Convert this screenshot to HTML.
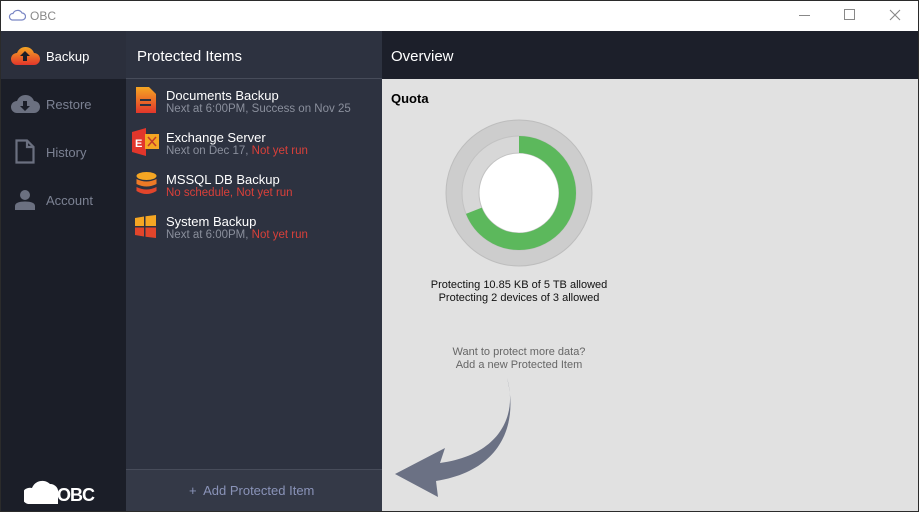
<!DOCTYPE html>
<html><head><meta charset="utf-8"><style>
*{margin:0;padding:0;box-sizing:border-box}
body{width:919px;height:512px;overflow:hidden;background:#2b2b2b;font-family:"Liberation Sans",sans-serif;position:relative}
.abs{position:absolute}
.title{left:1px;top:1px;width:917px;height:30px;background:#fff}
.nav{left:1px;top:31px;width:125px;height:480px;background:#1b1e28}
.navsel{left:1px;top:31px;width:125px;height:48px;background:#2b2f3c}
.mid{left:126px;top:31px;width:256px;height:480px;background:#2d3240}
.ovh{left:382px;top:31px;width:536px;height:48px;background:#1c1f2a}
.ov{left:382px;top:79px;width:536px;height:432px;background:#e1e1e1}
.nt{font-size:13px;color:#7c8293}
.it1{font-size:13px;color:#fff}
.it2{font-size:11.5px;color:#8a8f9c}
.r{color:#d9403a}
</style></head><body>
<div class="abs title"></div>
<svg class="abs" style="left:8px;top:8px" width="18" height="14" viewBox="0 0 18 14"><path d="M4 12 H14 A3.5 3.5 0 0 0 14 5 A5 5 0 0 0 5 5.5 A3.3 3.3 0 0 0 4 12Z" fill="none" stroke="#7a86c4" stroke-width="1.2"/></svg>
<div class="abs" style="left:30px;top:9px;font-size:12px;color:#888">OBC</div>
<div class="abs" style="left:799px;top:15px;width:11px;height:1px;background:#888"></div>
<div class="abs" style="left:844px;top:9px;width:11px;height:11px;border:1px solid #888"></div>
<svg class="abs" style="left:889px;top:9px" width="12" height="12"><path d="M1 1L11 11M11 1L1 11" stroke="#888" stroke-width="1.1"/></svg>

<div class="abs nav"></div><div class="abs navsel"></div>
<svg class="abs" style="left:10px;top:44px" width="30" height="22" viewBox="0 0 30 22"><defs><linearGradient id="g" x1="0" y1="0" x2="0" y2="1"><stop offset="0" stop-color="#f5a623"/><stop offset="1" stop-color="#e2362b"/></linearGradient></defs><path d="M7 21H24A6 6 0 0 0 24 9A9 9 0 0 0 7 9A6 6 0 0 0 7 21Z" fill="url(#g)"/><path d="M15 7L10 12H13V17H17V12H20Z" fill="#1b1e28"/></svg>
<div class="abs" style="left:46px;top:49px;font-size:13px;color:#fff">Backup</div>
<svg class="abs" style="left:10px;top:92px" width="30" height="22" viewBox="0 0 30 22"><path d="M7 21H24A6 6 0 0 0 24 9A9 9 0 0 0 7 9A6 6 0 0 0 7 21Z" fill="#6b7080"/><path d="M15 19L10 14H13V9H17V14H20Z" fill="#1b1e28"/></svg>
<div class="abs nt" style="left:46px;top:97px">Restore</div>
<svg class="abs" style="left:15px;top:139px" width="20" height="25" viewBox="0 0 20 25"><path d="M1.5 1.5H12L18.5 8V23.5H1.5Z M12 1.5V8H18.5" fill="none" stroke="#6b7080" stroke-width="2.2"/></svg>
<div class="abs nt" style="left:46px;top:145px">History</div>
<svg class="abs" style="left:15px;top:189px" width="20" height="22" viewBox="0 0 20 22"><circle cx="10" cy="6" r="5" fill="#6b7080"/><path d="M0 21V17C0 14 4 12.5 10 12.5S20 14 20 17V21Z" fill="#6b7080"/></svg>
<div class="abs nt" style="left:46px;top:193px">Account</div>
<svg class="abs" style="left:24px;top:472px" width="80" height="34" viewBox="0 0 80 34"><path d="M4 32H34V22A8 8 0 0 0 26 12A11 11 0 0 0 8 16A8 8 0 0 0 4 32Z" fill="#fff"/></svg>
<div class="abs" style="left:57px;top:485px;font-size:18px;font-weight:bold;color:#fff;letter-spacing:-1px">OBC</div>

<div class="abs mid"></div>
<div class="abs" style="left:137px;top:48px;font-size:15px;color:#fff">Protected Items</div>
<div class="abs" style="left:126px;top:78px;width:256px;height:1px;background:#474c5a"></div>
<svg class="abs" style="left:136px;top:87px" width="20" height="26"><path d="M0 0H13L20 7V26H0Z" fill="url(#g)"/><rect x="4" y="12" width="11" height="2" fill="#2d3240"/><rect x="4" y="17" width="11" height="2" fill="#2d3240"/></svg>
<div class="abs it1" style="left:166px;top:88px">Documents Backup</div>
<div class="abs it2" style="left:166px;top:103px">Next at 6:00PM, Success on Nov 25</div>
<svg class="abs" style="left:132px;top:128px" width="30" height="28"><path d="M0 4L14 0V28L0 24Z" fill="#e2362b"/><rect x="13" y="6" width="14" height="15" fill="#f5a623"/><text x="3" y="19" font-size="11" font-weight="bold" fill="#fff" font-family="Liberation Sans">E</text><path d="M16 9L24 18M24 9L16 18" stroke="#c0392b" stroke-width="1.5"/></svg>
<div class="abs it1" style="left:166px;top:130px">Exchange Server</div>
<div class="abs it2" style="left:166px;top:145px">Next on Dec 17, <span class="r">Not yet run</span></div>
<svg class="abs" style="left:136px;top:172px" width="21" height="24"><ellipse cx="10.5" cy="4" rx="10" ry="4" fill="#f5a623"/><path d="M0.5 7Q10.5 12 20.5 7V12Q10.5 17 0.5 12Z" fill="#ee7a26"/><path d="M0.5 15Q10.5 20 20.5 15V19Q10.5 25 0.5 19Z" fill="#e2452b"/></svg>
<div class="abs it1" style="left:166px;top:172px">MSSQL DB Backup</div>
<div class="abs it2 r" style="left:166px;top:187px">No schedule, Not yet run</div>
<svg class="abs" style="left:135px;top:215px" width="22" height="23"><path d="M0 3L9 1.5V11H0Z M10.5 1.3L21 0V11H10.5Z" fill="#f5a623"/><path d="M0 12.5H9V21.5L0 20Z M10.5 12.5H21V23L10.5 21.7Z" fill="#e2452b"/></svg>
<div class="abs it1" style="left:166px;top:214px">System Backup</div>
<div class="abs it2" style="left:166px;top:229px">Next at 6:00PM, <span class="r">Not yet run</span></div>
<div class="abs" style="left:126px;top:469px;width:256px;height:42px;background:#343947;border-top:1px solid #474c5a"></div>
<div class="abs" style="left:189px;top:483px;font-size:13px;color:#8a93b8">+&nbsp; Add Protected Item</div>

<div class="abs ovh"></div>
<div class="abs" style="left:391px;top:48px;font-size:15px;color:#fff">Overview</div>
<div class="abs ov"></div>
<div class="abs" style="left:391px;top:91px;font-size:13px;font-weight:bold;color:#000">Quota</div>
<svg class="abs" style="left:444px;top:118px" width="150" height="150" viewBox="0 0 150 150"><circle cx="75" cy="75" r="73" fill="#cdcdcd" stroke="#bdbdbd"/><circle cx="75" cy="75" r="57" fill="#d7d7d7" stroke="#c2c2c2"/><circle cx="75" cy="75" r="40" fill="#fff" stroke="#c2c2c2"/><circle cx="75" cy="75" r="48.5" fill="none" stroke="#5cb85c" stroke-width="17" stroke-dasharray="210 400" transform="rotate(-90 75 75)"/></svg>
<div class="abs" style="left:382px;top:279px;width:274px;text-align:center;font-size:11px;line-height:13px;color:#111">Protecting 10.85 KB of 5 TB allowed<br>Protecting 2 devices of 3 allowed</div>
<div class="abs" style="left:382px;top:346px;width:274px;text-align:center;font-size:11px;line-height:13px;color:#666">Want to protect more data?<br>Add a new Protected Item</div>
<svg class="abs" style="left:390px;top:375px" width="130" height="130" viewBox="0 0 130 130"><path d="M117 3C128 40 110 80 50 88L55 73L5 99L48 122L46 106C115 95 128 45 117 3Z" fill="#6b7184"/></svg>
</body></html>
